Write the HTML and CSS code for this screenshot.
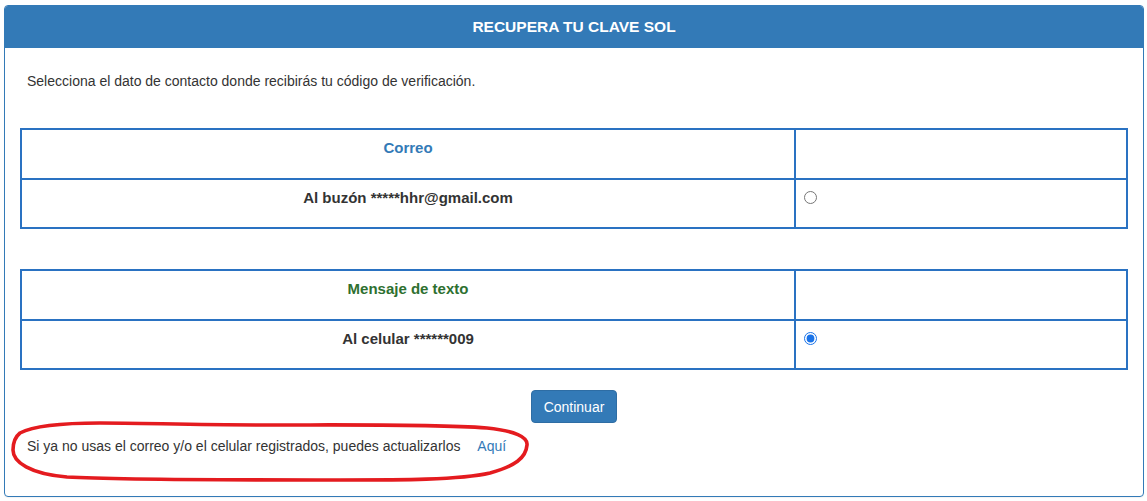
FILE: index.html
```html
<!DOCTYPE html>
<html lang="es">
<head>
<meta charset="utf-8">
<title>Recupera tu Clave SOL</title>
<link rel="stylesheet" href="styles.css">
</head>
<body>
<div class="panel">
  <div class="panel-heading">RECUPERA TU CLAVE SOL</div>
  <div class="panel-body">
    <p class="intro">Selecciona el dato de contacto donde recibirás tu código de verificación.</p>

    <table class="contact">
      <colgroup><col class="c1"><col class="c2"></colgroup>
      <tr class="head">
        <td class="label mail">Correo</td>
        <td></td>
      </tr>
      <tr class="row">
        <td class="value">Al buzón *****hhr@gmail.com</td>
        <td class="pick"><input type="radio" name="canal" value="correo"></td>
      </tr>
    </table>

    <table class="contact second">
      <colgroup><col class="c1"><col class="c2"></colgroup>
      <tr class="head">
        <td class="label sms">Mensaje de texto</td>
        <td></td>
      </tr>
      <tr class="row">
        <td class="value">Al celular ******009</td>
        <td class="pick"><input type="radio" name="canal" value="sms" checked></td>
      </tr>
    </table>

    <div class="actions"><button class="btn" type="button">Continuar</button></div>

    <p class="footer">Si ya no usas el correo y/o el celular registrados, puedes actualizarlos <a class="link" href="#">Aquí</a></p>
  </div>
</div>
<svg class="mark" width="1147" height="501" viewBox="0 0 1147 501" aria-hidden="true">
  <path d="M 20 433 C 35 425, 70 423, 100 423 C 140 423, 200 425, 270 425 C 350 425, 430 424, 487 428 C 515 431, 528 437, 527 445 C 526 458, 515 466, 490 473 C 460 480, 400 480, 340 480 C 250 480, 120 480, 67 477 C 30 474, 13 462, 13 450 C 13 442, 15 437, 20 433 Z" fill="none" stroke="#e41b1f" stroke-width="3.6" stroke-linejoin="round"/>
</svg>
</body>
</html>
```

FILE: styles.css
```css
html, body {
  margin: 0;
  padding: 0;
  background: #ffffff;
}
body {
  font-family: "Liberation Sans", Arial, sans-serif;
  font-size: 14px;
  line-height: 20px;
  color: #333333;
  padding: 5px 3px 0 4px;
  position: relative;
  height: 501px;
  box-sizing: border-box;
  overflow: hidden;
}
.panel {
  border: 1px solid #337ab7;
  border-radius: 4px;
  height: 492px;
  box-sizing: border-box;
  box-shadow: 0 1px 1px rgba(0,0,0,0.05);
}
.panel-heading {
  background: #337ab7;
  color: #ffffff;
  font-weight: bold;
  font-size: 15.5px;
  text-align: center;
  height: 42px;
  line-height: 42px;
  border-radius: 3px 3px 0 0;
}
.panel-body {
  padding: 15px;
}
.intro {
  margin: 0 0 29px 0;
  padding: 8px 7px;
}
.contact {
  width: 100%;
  border-collapse: collapse;
  table-layout: fixed;
}
.contact .c1 { width: 774px; }
.contact td {
  border: 2px solid #2a72c2;
  padding: 8px;
  vertical-align: top;
  height: 32px;
  font-size: 15px;
}
.contact .row td {
  height: 31px;
}
.contact.second {
  margin-top: 40px;
}
.label {
  text-align: center;
  font-weight: bold;
}
.mail { color: #337ab7; }
.sms { color: #2e7030; }
.value {
  text-align: center;
  font-weight: bold;
  color: #333333;
}
.pick input {
  margin: 3px 0 0 0;
  width: 13px;
  height: 13px;
  accent-color: #1a73e8;
}
.actions {
  text-align: center;
  margin-top: 20px;
}
.btn {
  font-family: "Liberation Sans", Arial, sans-serif;
  font-size: 14px;
  line-height: 20px;
  color: #ffffff;
  background: #337ab7;
  border: 1px solid #2e6da4;
  border-radius: 4px;
  padding: 6px 12px;
  height: 33px;
}
.footer {
  margin: 13px 0 0 0;
  padding-left: 7px;
}
.link {
  color: #337ab7;
  text-decoration: none;
  margin-left: 13px;
}
.mark {
  position: absolute;
  left: 0;
  top: 0;
  pointer-events: none;
}
```
